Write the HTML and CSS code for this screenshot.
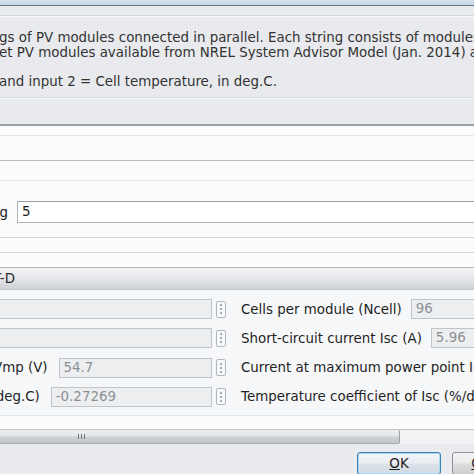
FILE: index.html
```html
<!DOCTYPE html>
<html>
<head>
<meta charset="utf-8">
<title>Block Parameters: PV Array</title>
<link rel="stylesheet" href="styles.css">
</head>
<body>
<div class="dialog">
  <div class="titlebar"></div>
  <div class="desc">
    <div class="group">
      <div class="line"><span class="pre">This block implements a PV array built of strin</span><span class="txt">gs of PV modules connected in parallel. Each string consists of modules connected in series.</span></div>
      <div class="line"><span class="pre">Allows modeling of a variety of pres</span><span class="txt">et PV modules available from NREL System Advisor Model (Jan. 2014) as well as user-defined PV module.</span></div>
      <div class="line"></div>
      <div class="line"><span class="pre">Input 1 = Sun irradiance, in W/m2,</span><span class="txt">and input 2 = Cell temperature, in deg.C.</span></div>
    </div>
  </div>
  <div class="params">
    <div class="band b1"></div>
    <div class="band b2"></div>
    <div class="band b3"></div>
    <div class="series">
      <span class="pre">Series-connected modules per string</span>
      <div class="edit">5</div>
    </div>
    <div class="band b4"></div>
    <div class="band b5"></div>
  </div>
  <div class="section-head"><span class="pre">Module data: SunPower SPR-305E-WHT-D</span></div>
  <div class="rows">
    <div class="prow">
      <div class="pcell left"><span class="plabel">Maximum Power (W)</span><span class="field">305.226</span></div>
      <span class="dots"><i></i><i></i><i></i></span>
      <div class="pcell right"><span class="plabel">Cells per module (Ncell)</span><span class="field">96</span></div>
    </div>
    <div class="prow">
      <div class="pcell left"><span class="plabel">Open circuit voltage Voc (V)</span><span class="field">64.2</span></div>
      <span class="dots"><i></i><i></i><i></i></span>
      <div class="pcell right"><span class="plabel">Short-circuit current Isc (A)</span><span class="field">5.96</span></div>
    </div>
    <div class="prow">
      <div class="pcell left"><span class="plabel">Voltage at maximum power point Vmp (V)</span><span class="field">54.7</span></div>
      <span class="dots"><i></i><i></i><i></i></span>
      <div class="pcell right"><span class="plabel">Current at maximum power point Imp (A)</span><span class="field">5.58</span></div>
    </div>
    <div class="prow">
      <div class="pcell left"><span class="plabel">Temperature coefficient of Voc (%/deg.C)</span><span class="field">-0.27269</span></div>
      <span class="dots"><i></i><i></i><i></i></span>
      <div class="pcell right"><span class="plabel">Temperature coefficient of Isc (%/deg.C)</span><span class="field">0.061745</span></div>
    </div>
  </div>
  <div class="spacer"></div>
  <div class="hscroll"><div class="thumb"><span class="grip"><i></i><i></i><i></i></span></div></div>
  <div class="buttons">
    <button class="btn default"><u>O</u>K</button>
    <button class="btn"><u>C</u>ancel</button>
    <button class="btn"><u>H</u>elp</button>
    <button class="btn"><u>A</u>pply</button>
  </div>
</div>
</body>
</html>
```
FILE: styles.css
```css
html, body {
  margin: 0;
  padding: 0;
  width: 474px;
  height: 474px;
  overflow: hidden;
  background: #e9ebee;
}
body {
  font-family: "DejaVu Sans", Verdana, sans-serif;
  font-size: 13.4px;
  color: #262626;
}
.dialog {
  width: 474px;
  height: 474px;
  display: flex;
  flex-direction: column;
  overflow: hidden;
}
.titlebar {
  flex: none;
  height: 5px;
  background: linear-gradient(#d7e2ed, #c4d3e3);
  border-bottom: 1px solid #6f7a86;
}
.desc {
  flex: none;
  background: #e8eaed;
  padding: 9px 0 26px;
  border-bottom: 2px solid #9a9fa5;
}
.group {
  border-top: 1px solid #d3d6da;
  border-bottom: 1px solid #d3d6da;
  box-shadow: 0 1px 0 #f8f9fa, inset 0 1px 0 #f8f9fa;
  padding: 15px 0 8px;
  color: #333;
}
.line {
  display: flex;
  height: 14.5px;
  line-height: 14.5px;
  white-space: nowrap;
}
.pre {
  flex: none;
  width: 0;
  min-width: 0;
  display: flex;
  justify-content: flex-end;
  white-space: nowrap;
}
.txt {
  flex: none;
  margin-left: -1px;
}
.params {
  flex: none;
  background: #fbfbfc;
}
.band {
  border-bottom: 1px solid #e3e6e9;
}
.b1 { height: 9px; }
.b2 { height: 24px; border-bottom-color: #b8bcc1; }
.b3 { height: 19px; }
.b4 { height: 14px; border-bottom-color: #d2d5d9; }
.b5 { height: 14px; border-bottom: 0; }
.series {
  display: flex;
  align-items: center;
  gap: 9px;
  width: 640px;
  padding: 20px 0 14px;
  border-bottom: 1px solid #d2d5d9;
  color: #222;
}
.series .pre {
  width: 8px;
}
.edit {
  flex: 1;
  height: 22px;
  box-sizing: border-box;
  border: 1px solid #adb2b7;
  border-top-color: #989da3;
  background: #fff;
  line-height: 20px;
  padding-left: 4px;
  color: #1a1a1a;
}
.section-head {
  flex: none;
  height: 21px;
  display: flex;
  align-items: center;
  border-top: 1px solid #b3b7bc;
  border-bottom: 1px solid #c6c9cd;
  background: linear-gradient(#f3f4f6, #e4e6e9 50%, #cfd2d6);
  color: #2a2a2a;
}
.section-head .pre {
  width: 15px;
}
.rows {
  flex: none;
  display: flex;
  flex-direction: column;
  gap: 9.33px;
  padding: 9px 0 8px;
  background: #f6f7f8;
  border-bottom: 1px solid #e2e5e8;
}
.prow {
  display: flex;
  align-items: center;
  height: 20px;
  margin-left: -235px;
}
.pcell {
  flex: none;
  display: flex;
  align-items: center;
  gap: 11px;
}
.pcell.left {
  width: 447px;
}
.pcell.right {
  width: 480px;
  gap: 9px;
  margin-left: 15px;
}
.plabel {
  flex: none;
  white-space: nowrap;
  color: #1f1f1f;
}
.field {
  flex: 1;
  min-width: 0;
  height: 20px;
  box-sizing: border-box;
  border: 1px solid #c1c5c9;
  background: #edeef0;
  color: #8d9195;
  line-height: 18px;
  padding-left: 4px;
  white-space: nowrap;
  overflow: hidden;
}
.dots {
  flex: none;
  width: 10px;
  height: 17px;
  margin-left: 4px;
  box-sizing: border-box;
  border: 1px solid #b3b7bc;
  border-radius: 2px;
  background: #f7f8f9;
  display: flex;
  flex-direction: column;
  align-items: center;
  justify-content: center;
  gap: 2px;
}
.dots i {
  width: 2px;
  height: 2px;
  border-radius: 1px;
  background: #8c9095;
}
.spacer {
  flex: none;
  height: 13px;
  background: #fbfbfc;
}
.hscroll {
  flex: none;
  height: 14px;
  display: flex;
  border-top: 1px solid #bec2c6;
  background: #f2f3f5;
}
.thumb {
  flex: none;
  width: 636px;
  height: 14px;
  margin-left: -236px;
  box-sizing: border-box;
  display: flex;
  align-items: center;
  justify-content: center;
  background: linear-gradient(#eef0f2, #e2e4e7 45%, #cdd0d4 55%, #c2c6ca);
  border-right: 1px solid #9ba0a5;
  border-bottom: 1px solid #a9adb2;
  border-radius: 0 2px 2px 0;
}
.grip {
  display: flex;
  gap: 2px;
}
.grip i {
  width: 1px;
  height: 5px;
  background: #6f7479;
}
.buttons {
  flex: 1;
  display: flex;
  gap: 11px;
  padding: 8px 0 0 357px;
  background: #e9ebee;
}
.btn {
  flex: none;
  width: 84px;
  height: 23px;
  box-sizing: border-box;
  padding: 0;
  font: inherit;
  color: #1e1e1e;
  line-height: 21px;
  text-align: center;
  border: 1px solid #8e9297;
  border-radius: 3px;
  background: linear-gradient(#f4f4f4, #ebebeb 48%, #dddddd 52%, #cfcfcf);
}
.btn.default {
  border-color: #3c7fb1;
  box-shadow: inset 0 0 0 1px #a9d8f5;
  background: linear-gradient(#f3f6f9, #e8edf2 48%, #dce3ea 52%, #d2dae2);
}
```
